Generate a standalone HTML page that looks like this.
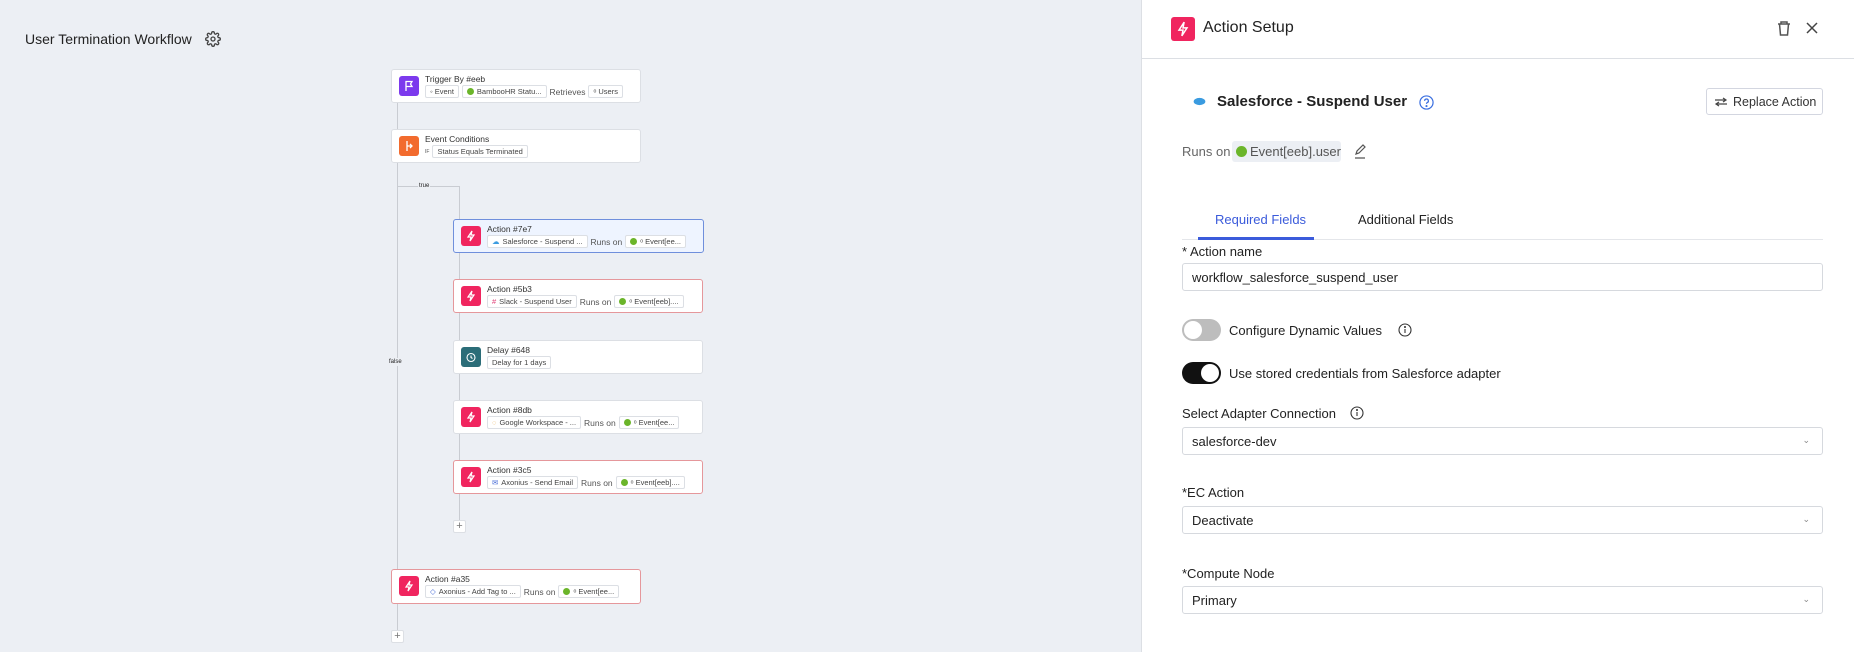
<!DOCTYPE html>
<html><head><meta charset="utf-8"><style>
*{box-sizing:border-box;margin:0;padding:0}
body{width:1854px;height:652px;overflow:hidden;background:#eceff4;font-family:"Liberation Sans",sans-serif;position:relative;color:#222}
.abs{position:absolute}
.node{position:absolute;background:#fff;border:1px solid #dcdfe4;border-radius:3px;height:34px;width:250px}
.node.sel{border-color:#6f8fdc;background:#eef4ff;width:251px}
.node.err{border-color:#e5979b}
.ic{position:absolute;left:7px;top:6px;width:20px;height:20px;border-radius:3px;display:flex;align-items:center;justify-content:center}
.tt{position:absolute;left:33px;top:4px;font-size:8.5px;color:#333}
.row{position:absolute;left:33px;top:15px;display:flex;align-items:center;gap:3px;font-size:8.5px;color:#555;white-space:nowrap}
.chip{border:1px solid #dcdfe4;border-radius:2px;background:#fff;height:13px;padding:0 4px;display:flex;align-items:center;gap:3px;font-size:7.5px;color:#444}
.g{width:7px;height:7px;border-radius:50%;background:#6bb52a;display:inline-block}
.pink{background:#f0255f}
.line{position:absolute;background:#c9ccd2}
.plus{position:absolute;width:13px;height:13px;background:#fff;border:1px solid #dcdfe4;border-radius:2px;font-size:11px;color:#777;display:flex;align-items:center;justify-content:center;line-height:1}
.panel{position:absolute;left:1141px;top:0;width:713px;height:652px;background:#fff;border-left:1px solid #dcdfe4}
.lbl{position:absolute;left:40px;font-size:13px;color:#222}
.inp{position:absolute;left:40px;width:641px;height:28px;border:1px solid #d6d9de;border-radius:3px;font-size:13px;color:#222;padding-left:9px;display:flex;align-items:center}
.chev{position:absolute;right:12px;top:7px;font-size:9px;color:#888}
.tog{position:absolute;left:40px;width:39px;height:22px;border-radius:11px}
.tog i{position:absolute;top:2px;width:18px;height:18px;border-radius:50%;background:#fff}
</style></head><body>
<div class="abs" style="left:25px;top:31px;font-size:14px;color:#222">User Termination Workflow</div>
<svg class="abs" style="left:205px;top:31px" width="16" height="16" viewBox="0 0 24 24" fill="none" stroke="#444" stroke-width="2"><circle cx="12" cy="12" r="3"/><path d="M19.4 15a1.7 1.7 0 0 0 .3 1.8l.1.1a2 2 0 1 1-2.8 2.8l-.1-.1a1.7 1.7 0 0 0-1.8-.3 1.7 1.7 0 0 0-1 1.5V21a2 2 0 1 1-4 0v-.1a1.7 1.7 0 0 0-1.1-1.5 1.7 1.7 0 0 0-1.8.3l-.1.1a2 2 0 1 1-2.8-2.8l.1-.1a1.7 1.7 0 0 0 .3-1.8 1.7 1.7 0 0 0-1.5-1H3a2 2 0 1 1 0-4h.1a1.7 1.7 0 0 0 1.5-1.1 1.7 1.7 0 0 0-.3-1.8l-.1-.1a2 2 0 1 1 2.8-2.8l.1.1a1.7 1.7 0 0 0 1.8.3H9a1.7 1.7 0 0 0 1-1.5V3a2 2 0 1 1 4 0v.1a1.7 1.7 0 0 0 1 1.5 1.7 1.7 0 0 0 1.8-.3l.1-.1a2 2 0 1 1 2.8 2.8l-.1.1a1.7 1.7 0 0 0-.3 1.8V9a1.7 1.7 0 0 0 1.5 1H21a2 2 0 1 1 0 4h-.1a1.7 1.7 0 0 0-1.5 1z"/></svg>

<div class="line" style="left:397px;top:103px;width:1px;height:527px"></div>
<div class="line" style="left:397px;top:186px;width:62px;height:1px"></div>
<div class="line" style="left:459px;top:186px;width:1px;height:334px"></div>
<div class="abs" style="left:418px;top:183px;font-size:6px;background:#eceff4;padding:0 1px">true</div>
<div class="abs" style="left:389px;top:358px;font-size:6px;background:#eceff4;padding:1px 0">false</div>

<div class="node" style="left:391px;top:69px"><div class="ic" style="background:#7c3aed"><svg width="12" height="12" viewBox="0 0 12 12" fill="none" stroke="#fff" stroke-width="1.3"><path d="M3 11V1.5h6L7.5 4 9 6.5H3"/></svg></div><div class="tt">Trigger By #eeb</div><div class="row"><span class="chip">◦ Event</span><span class="chip"><i class="g"></i>BambooHR Statu...</span><span>Retrieves</span><span class="chip">ᵒ Users</span></div></div>
<div class="node" style="left:391px;top:129px"><div class="ic" style="background:#f26b2e"><svg width="12" height="12" viewBox="0 0 12 12" fill="none" stroke="#fff" stroke-width="1.3"><path d="M4 1v10M4 6h5M7 4l2 2-2 2"/></svg></div><div class="tt">Event Conditions</div><div class="row"><span style="font-size:5px">IF</span><span class="chip">Status Equals Terminated</span></div></div>

<div class="node sel" style="left:453px;top:219px"><div class="ic pink"><svg width="12" height="12" viewBox="0 0 12 12" fill="none" stroke="#fff" stroke-width="1.2"><path d="M7 1L3 7h3l-1 4 4-6H6z"/></svg></div><div class="tt">Action #7e7</div><div class="row"><span class="chip"><span style="color:#3a9be0">☁</span>Salesforce - Suspend ...</span><span>Runs on</span><span class="chip"><i class="g"></i>ᵒ Event[ee...</span></div></div>
<div class="node err" style="left:453px;top:279px"><div class="ic pink"><svg width="12" height="12" viewBox="0 0 12 12" fill="none" stroke="#fff" stroke-width="1.2"><path d="M7 1L3 7h3l-1 4 4-6H6z"/></svg></div><div class="tt">Action #5b3</div><div class="row"><span class="chip"><span style="color:#e0457b">#</span>Slack - Suspend User</span><span>Runs on</span><span class="chip"><i class="g"></i>ᵒ Event[eeb]....</span></div></div>
<div class="node" style="left:453px;top:340px"><div class="ic" style="background:#2b6d78"><svg width="12" height="12" viewBox="0 0 12 12" fill="none" stroke="#fff" stroke-width="1.1"><circle cx="6" cy="6.5" r="4"/><path d="M6 4.5v2l1.5 1"/></svg></div><div class="tt">Delay #648</div><div class="row"><span class="chip">Delay for 1 days</span></div></div>
<div class="node" style="left:453px;top:400px"><div class="ic pink"><svg width="12" height="12" viewBox="0 0 12 12" fill="none" stroke="#fff" stroke-width="1.2"><path d="M7 1L3 7h3l-1 4 4-6H6z"/></svg></div><div class="tt">Action #8db</div><div class="row"><span class="chip"><span style="color:#e8a33a">◌</span>Google Workspace - ...</span><span>Runs on</span><span class="chip"><i class="g"></i>ᵒ Event[ee...</span></div></div>
<div class="node err" style="left:453px;top:460px"><div class="ic pink"><svg width="12" height="12" viewBox="0 0 12 12" fill="none" stroke="#fff" stroke-width="1.2"><path d="M7 1L3 7h3l-1 4 4-6H6z"/></svg></div><div class="tt">Action #3c5</div><div class="row"><span class="chip"><span style="color:#4a6ed8">✉</span>Axonius - Send Email</span><span>Runs on</span><span class="chip"><i class="g"></i>ᵒ Event[eeb]....</span></div></div>
<div class="plus" style="left:453px;top:520px">+</div>

<div class="node err" style="left:391px;top:569px;height:35px"><div class="ic pink"><svg width="12" height="12" viewBox="0 0 12 12" fill="none" stroke="#fff" stroke-width="1.2"><path d="M7 1L3 7h3l-1 4 4-6H6z"/></svg></div><div class="tt">Action #a35</div><div class="row"><span class="chip"><span style="color:#4a6ed8">◇</span>Axonius - Add Tag to ...</span><span>Runs on</span><span class="chip"><i class="g"></i>ᵒ Event[ee...</span></div></div>
<div class="plus" style="left:391px;top:630px">+</div>

<div class="panel">
 <div class="abs" style="left:0;top:58px;width:713px;height:1px;background:#dcdfe4"></div>
 <div class="abs pink" style="left:29px;top:17px;width:24px;height:24px;border-radius:3px;display:flex;align-items:center;justify-content:center"><svg width="14" height="16" viewBox="0 0 12 14" fill="none" stroke="#fff" stroke-width="1.3"><path d="M7 1L2.5 8h3.5l-1 5 4.5-7H6z"/></svg></div>
 <div class="abs" style="left:61px;top:19px;font-size:16px;color:#222">Action Setup</div>
 <svg class="abs" style="left:634px;top:20px" width="16" height="17" viewBox="0 0 16 17" fill="none" stroke="#555" stroke-width="1.5"><path d="M2 4h12M5 4V2h6v2M3.5 4l1 11h7l1-11"/></svg>
 <svg class="abs" style="left:664px;top:22px" width="12" height="12" viewBox="0 0 12 12" stroke="#444" stroke-width="1.5"><path d="M1 1l10 10M11 1L1 11"/></svg>

 <svg class="abs" style="left:51px;top:97px" width="13" height="9" viewBox="0 0 14 10"><ellipse cx="7" cy="5" rx="6.5" ry="4" fill="#3a9be0"/></svg>
 <div class="abs" style="left:75px;top:93px;font-size:15px;font-weight:bold;color:#222;white-space:nowrap">Salesforce - Suspend User</div>
 <svg class="abs" style="left:277px;top:95px" width="15" height="15" viewBox="0 0 16 16" fill="none" stroke="#3b6fe0" stroke-width="1.3"><circle cx="8" cy="8" r="7"/><path d="M6 6.3a2 2 0 1 1 2.6 1.9c-.5.2-.6.6-.6 1.3"/><circle cx="8" cy="11.8" r=".5" fill="#3b6fe0"/></svg>
 <div class="abs" style="left:564px;top:88px;width:117px;height:27px;border:1px solid #d3d6e0;border-radius:3px;font-size:12.5px;color:#333;display:flex;align-items:center;padding-left:7px;gap:5px;white-space:nowrap"><svg width="14" height="10" viewBox="0 0 14 10" fill="none" stroke="#444" stroke-width="1.2"><path d="M1 3h11M9 1l3 2-3 2M13 7H2M5 5L2 7l3 2"/></svg>Replace Action</div>

 <div class="abs" style="left:40px;top:144px;font-size:13px;color:#666">Runs on</div>
 <div class="abs" style="left:90px;top:141px;width:109px;height:21px;background:#eceff4;border-radius:3px;font-size:13px;color:#555;display:flex;align-items:center;padding-left:4px;gap:3px;white-space:nowrap"><i class="g" style="width:11px;height:11px"></i>Event[eeb].user</div>
 <svg class="abs" style="left:211px;top:143px" width="14" height="16" viewBox="0 0 14 16" fill="none" stroke="#555" stroke-width="1.2"><path d="M3 11l1-3 6-6 2 2-6 6zM2 15h10"/></svg>

 <div class="abs" style="left:73px;top:212px;font-size:13px;color:#3b5bdb">Required Fields</div>
 <div class="abs" style="left:216px;top:212px;font-size:13px;color:#222">Additional Fields</div>
 <div class="abs" style="left:40px;top:239px;width:641px;height:1px;background:#e4e6ea"></div>
 <div class="abs" style="left:56px;top:237px;width:116px;height:3px;background:#3b5bdb"></div>

 <div class="lbl" style="top:244px">* Action name</div>
 <div class="inp" style="top:263px">workflow_salesforce_suspend_user</div>

 <div class="tog" style="top:319px;background:#bdbdbd"><i style="left:2px"></i></div>
 <div class="lbl" style="left:87px;top:323px">Configure Dynamic Values</div>
 <svg class="abs" style="left:256px;top:323px" width="14" height="14" viewBox="0 0 14 14" fill="none" stroke="#333" stroke-width="1.1"><circle cx="7" cy="7" r="6"/><path d="M7 6v4"/><circle cx="7" cy="4" r=".5" fill="#333"/></svg>
 <div class="tog" style="top:362px;background:#111"><i style="left:19px"></i></div>
 <div class="lbl" style="left:87px;top:366px">Use stored credentials from Salesforce adapter</div>

 <div class="lbl" style="top:406px">Select Adapter Connection</div>
 <svg class="abs" style="left:208px;top:406px" width="14" height="14" viewBox="0 0 14 14" fill="none" stroke="#333" stroke-width="1.1"><circle cx="7" cy="7" r="6"/><path d="M7 6v4"/><circle cx="7" cy="4" r=".5" fill="#333"/></svg>
 <div class="inp" style="top:427px">salesforce-dev<span class="chev">⌄</span></div>
 <div class="lbl" style="top:485px">*EC Action</div>
 <div class="inp" style="top:506px">Deactivate<span class="chev">⌄</span></div>
 <div class="lbl" style="top:566px">*Compute Node</div>
 <div class="inp" style="top:586px">Primary<span class="chev">⌄</span></div>
</div>
</body></html>
